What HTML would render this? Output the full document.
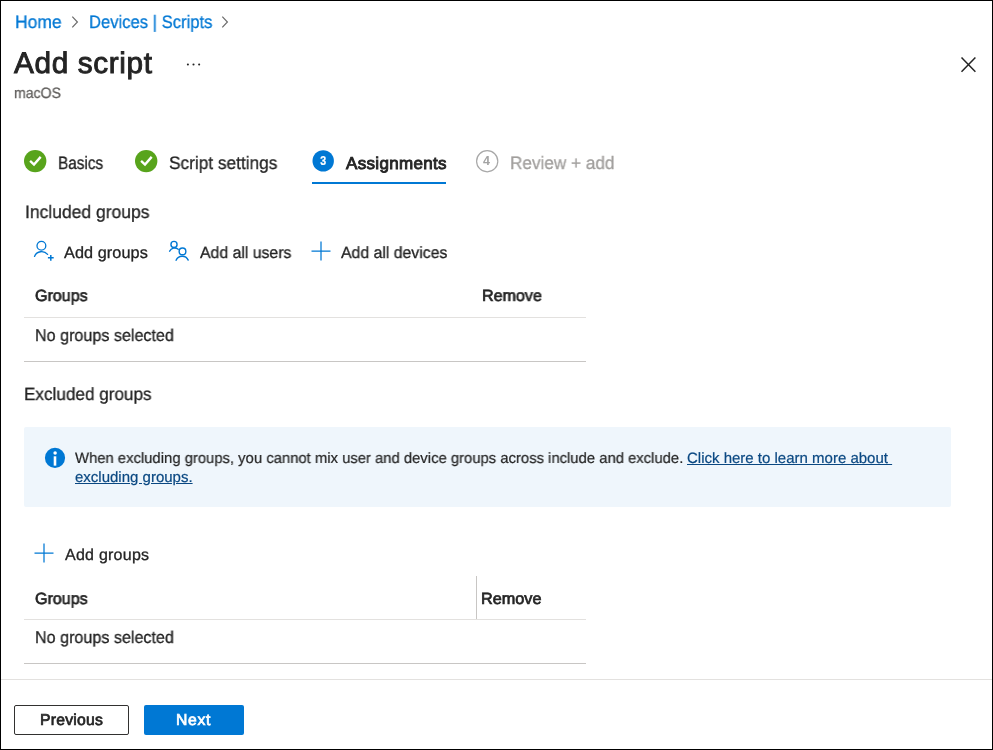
<!DOCTYPE html>
<html><head><meta charset="utf-8">
<style>
html,body{margin:0;padding:0;background:#fff;}
body{width:993px;height:750px;position:relative;overflow:hidden;font-family:"Liberation Sans",sans-serif;color:#323130;}
.frame{position:absolute;left:0;top:0;width:991px;height:748px;border:1px solid #000;}
.t{position:absolute;white-space:nowrap;transform-origin:0 0;will-change:transform;text-rendering:geometricPrecision;}
.hl{position:absolute;height:1px;background:#e3e1df;}
svg{position:absolute;will-change:transform;}
</style></head><body>
<div class="frame"></div>
<div class="t" style="left:14.6px;top:13px;font-size:18.0px;line-height:18.0px;color:#0078d4;-webkit-text-stroke:0.3px #0078d4;letter-spacing:0px;transform:scaleX(0.9717);">Home</div>
<svg style="left:66px;top:12px" width="20" height="20" viewBox="0 0 20 20"><path d="M6.3 4.6 L11.4 10 L6.3 15.4" fill="none" stroke="#6b6b6b" stroke-width="1.2"/></svg>
<div class="t" style="left:88.6px;top:13px;font-size:18.0px;line-height:18.0px;color:#0078d4;-webkit-text-stroke:0.3px #0078d4;letter-spacing:0px;transform:scaleX(0.9227);">Devices | Scripts</div>
<svg style="left:216px;top:12px" width="20" height="20" viewBox="0 0 20 20"><path d="M6.3 4.6 L11.4 10 L6.3 15.4" fill="none" stroke="#6b6b6b" stroke-width="1.2"/></svg>
<div class="t" style="left:14.2px;top:49px;font-size:29.75px;line-height:29.75px;color:#242424;-webkit-text-stroke:0.9px #242424;letter-spacing:0.633px;transform:scaleX(1.0);">Add script</div>
<svg style="left:182px;top:56px" width="24" height="16" viewBox="0 0 24 16"><circle cx="5.9" cy="8.45" r="1.05" fill="#242424"/><circle cx="11.5" cy="8.45" r="1.05" fill="#242424"/><circle cx="17.15" cy="8.45" r="1.05" fill="#242424"/></svg>
<div class="t" style="left:14.2px;top:86px;font-size:15.0px;line-height:15.0px;color:#605e5c;-webkit-text-stroke:0.3px #605e5c;letter-spacing:0px;transform:scaleX(0.9396);">macOS</div>
<svg style="left:955px;top:50px" width="28" height="28" viewBox="0 0 28 28"><path d="M6.5 7.4 L20.4 21.8 M20.4 7.4 L6.5 21.8" stroke="#242424" stroke-width="1.5"/></svg>

<svg style="left:20px;top:146px" width="30" height="30" viewBox="0 0 30 30"><circle cx="15.2" cy="15.1" r="11.2" fill="#58a41c"/><path d="M10.1 14.9 L14 18.6 L20.7 10.9" fill="none" stroke="#fff" stroke-width="2.4"/></svg>
<div class="t" style="left:58.1px;top:154px;font-size:18.0px;line-height:18.0px;color:#242424;-webkit-text-stroke:0.3px #242424;letter-spacing:0px;transform:scaleX(0.8519);">Basics</div>
<svg style="left:131px;top:146px" width="30" height="30" viewBox="0 0 30 30"><circle cx="15.2" cy="15.1" r="11.2" fill="#58a41c"/><path d="M10.1 14.9 L14 18.6 L20.7 10.9" fill="none" stroke="#fff" stroke-width="2.4"/></svg>
<div class="t" style="left:168.8px;top:154px;font-size:18.0px;line-height:18.0px;color:#242424;-webkit-text-stroke:0.3px #242424;letter-spacing:0px;transform:scaleX(0.9589);">Script settings</div>
<svg style="left:308px;top:146px" width="30" height="30" viewBox="0 0 30 30"><circle cx="15.2" cy="14.9" r="10.7" fill="#0078d4"/><text x="15.1" y="18.8" text-anchor="middle" font-family="Liberation Sans" font-weight="bold" font-size="12.4" fill="#fff" stroke="#fff" stroke-width="0.2" transform="translate(15.1 0) scale(0.86 1) translate(-15.1 0)">3</text></svg>
<div class="t" style="left:345.6px;top:155px;font-size:17.0px;line-height:17.0px;color:#242424;-webkit-text-stroke:0.9px #242424;letter-spacing:0.32px;transform:scaleX(1.0);">Assignments</div>
<div style="position:absolute;left:312px;top:182px;width:134px;height:2px;background:#0078d4;"></div>
<svg style="left:472px;top:146px" width="30" height="30" viewBox="0 0 30 30"><circle cx="15.2" cy="15.2" r="10.6" fill="none" stroke="#a8a8a8" stroke-width="1.2"/><text x="14.6" y="18.8" text-anchor="middle" font-family="Liberation Sans" font-weight="bold" font-size="12.5" fill="#a3a3a3">4</text></svg>
<div class="t" style="left:510.0px;top:154px;font-size:18.0px;line-height:18.0px;color:#a19f9d;-webkit-text-stroke:0.3px #a19f9d;letter-spacing:0px;transform:scaleX(0.9537);">Review + add</div>

<div class="t" style="left:24.5px;top:203px;font-size:18.0px;line-height:18.0px;color:#242424;-webkit-text-stroke:0.3px #242424;letter-spacing:0px;transform:scaleX(0.9724);">Included groups</div>
<svg style="left:30px;top:238px" width="28" height="26" viewBox="0 0 28 26"><circle cx="11.4" cy="7.7" r="4.4" fill="none" stroke="#0078d4" stroke-width="1.3"/><path d="M4.5 18.4 A7.8 7.8 0 0 1 17.6 16.4" fill="none" stroke="#0078d4" stroke-width="1.3" stroke-linecap="round"/><path d="M20.8 16.9 V22.7 M17.9 19.8 H23.7" stroke="#0078d4" stroke-width="1.5"/></svg>
<div class="t" style="left:64.3px;top:245px;font-size:16.25px;line-height:16.25px;color:#242424;-webkit-text-stroke:0.3px #242424;letter-spacing:0.078px;transform:scaleX(1.0);">Add groups</div>
<svg style="left:164px;top:238px" width="28" height="26" viewBox="0 0 28 26"><circle cx="10" cy="6.4" r="3.05" fill="none" stroke="#0078d4" stroke-width="1.4"/><path d="M5.6 13.2 A5.6 5.6 0 0 1 14.2 11.2" fill="none" stroke="#0078d4" stroke-width="1.4" stroke-linecap="round"/><circle cx="18.5" cy="13.4" r="3.35" fill="none" stroke="#0078d4" stroke-width="1.4"/><path d="M12.1 22.3 A6.6 6.6 0 0 1 24.2 22.1" fill="none" stroke="#0078d4" stroke-width="1.4" stroke-linecap="round"/></svg>
<div class="t" style="left:199.5px;top:245px;font-size:16.25px;line-height:16.25px;color:#242424;-webkit-text-stroke:0.3px #242424;letter-spacing:0px;transform:scaleX(0.9731);">Add all users</div>
<svg style="left:311px;top:241px" width="20" height="20" viewBox="0 0 20 20"><path d="M10 0.5 V19.5 M0.5 10 H19.5" stroke="#0078d4" stroke-width="1.25"/></svg>
<div class="t" style="left:341.0px;top:245px;font-size:16.25px;line-height:16.25px;color:#242424;-webkit-text-stroke:0.3px #242424;letter-spacing:0px;transform:scaleX(0.9725);">Add all devices</div>

<div class="t" style="left:34.8px;top:288px;font-size:16.25px;line-height:16.25px;color:#242424;-webkit-text-stroke:0.7px #242424;letter-spacing:0px;transform:scaleX(0.9868);">Groups</div>
<div class="t" style="left:481.6px;top:288px;font-size:16.25px;line-height:16.25px;color:#242424;-webkit-text-stroke:0.7px #242424;letter-spacing:0px;transform:scaleX(0.9898);">Remove</div>
<div class="hl" style="left:24px;top:317px;width:562px;"></div>
<div class="t" style="left:34.6px;top:327px;font-size:17.0px;line-height:17.0px;color:#242424;-webkit-text-stroke:0.3px #242424;letter-spacing:0px;transform:scaleX(0.9483);">No groups selected</div>
<div class="hl" style="left:24px;top:361px;width:562px;background:#c8c6c4;"></div>

<div class="t" style="left:24.3px;top:386px;font-size:17.75px;line-height:17.75px;color:#242424;-webkit-text-stroke:0.3px #242424;letter-spacing:0px;transform:scaleX(0.9649);">Excluded groups</div>
<div style="position:absolute;left:24px;top:427px;width:927px;height:80px;background:#eff6fc;border-radius:2px;"></div>
<svg style="left:41px;top:444px" width="28" height="28" viewBox="0 0 28 28"><circle cx="14" cy="13.8" r="10.1" fill="#0078d4"/><circle cx="14.1" cy="9.05" r="1.75" fill="#fff"/><rect x="12.7" y="12.3" width="2.6" height="9.35" fill="#fff"/></svg>
<div class="t" style="left:74.6px;top:451px;font-size:15px;line-height:15px;color:#242424;-webkit-text-stroke:0.2px #242424;transform:scaleX(0.9885);">When excluding groups, you cannot mix user and device groups across include and exclude.</div>
<div class="t" style="left:687.2px;top:451px;font-size:15px;line-height:15px;color:#0a4882;-webkit-text-stroke:0.2px #0a4882;text-decoration:underline;transform:scaleX(1);">Click here to learn more about&nbsp;</div>
<div class="t" style="left:74.6px;top:470px;font-size:15px;line-height:15px;color:#0a4882;-webkit-text-stroke:0.2px #0a4882;text-decoration:underline;transform:scaleX(1);">excluding groups.</div>

<svg style="left:34px;top:543px" width="20" height="20" viewBox="0 0 20 20"><path d="M10 0.5 V19.5 M0.5 10 H19.5" stroke="#0078d4" stroke-width="1.25"/></svg>
<div class="t" style="left:64.8px;top:548px;font-size:16.0px;line-height:16.0px;color:#242424;-webkit-text-stroke:0.3px #242424;letter-spacing:0.244px;transform:scaleX(1.0);">Add groups</div>
<div style="position:absolute;left:476px;top:576px;width:1px;height:44px;background:#c8c6c4;"></div>
<div class="t" style="left:34.8px;top:591px;font-size:16.25px;line-height:16.25px;color:#242424;-webkit-text-stroke:0.7px #242424;letter-spacing:0px;transform:scaleX(0.9868);">Groups</div>
<div class="t" style="left:481.3px;top:591px;font-size:16.25px;line-height:16.25px;color:#242424;-webkit-text-stroke:0.7px #242424;letter-spacing:0px;transform:scaleX(0.9949);">Remove</div>
<div class="hl" style="left:24px;top:619px;width:562px;"></div>
<div class="t" style="left:34.6px;top:629px;font-size:17.0px;line-height:17.0px;color:#242424;-webkit-text-stroke:0.3px #242424;letter-spacing:0px;transform:scaleX(0.9483);">No groups selected</div>
<div class="hl" style="left:24px;top:663px;width:562px;background:#c8c6c4;"></div>

<div class="hl" style="left:1px;top:679px;width:991px;"></div>
<div style="position:absolute;left:14px;top:705px;width:113px;height:28px;border:1px solid #323130;border-radius:2px;"></div>
<div class="t" style="left:40.0px;top:713px;font-size:15.75px;line-height:15.75px;color:#242424;-webkit-text-stroke:0.7px #242424;letter-spacing:0.214px;transform:scaleX(1.0);">Previous</div>
<div style="position:absolute;left:144px;top:705px;width:100px;height:30px;background:#0078d4;border-radius:2px;"></div>
<div class="t" style="left:176.0px;top:713px;font-size:15.75px;line-height:15.75px;color:#ffffff;-webkit-text-stroke:0.7px #ffffff;letter-spacing:0.667px;transform:scaleX(1.0);">Next</div>

</body></html>
